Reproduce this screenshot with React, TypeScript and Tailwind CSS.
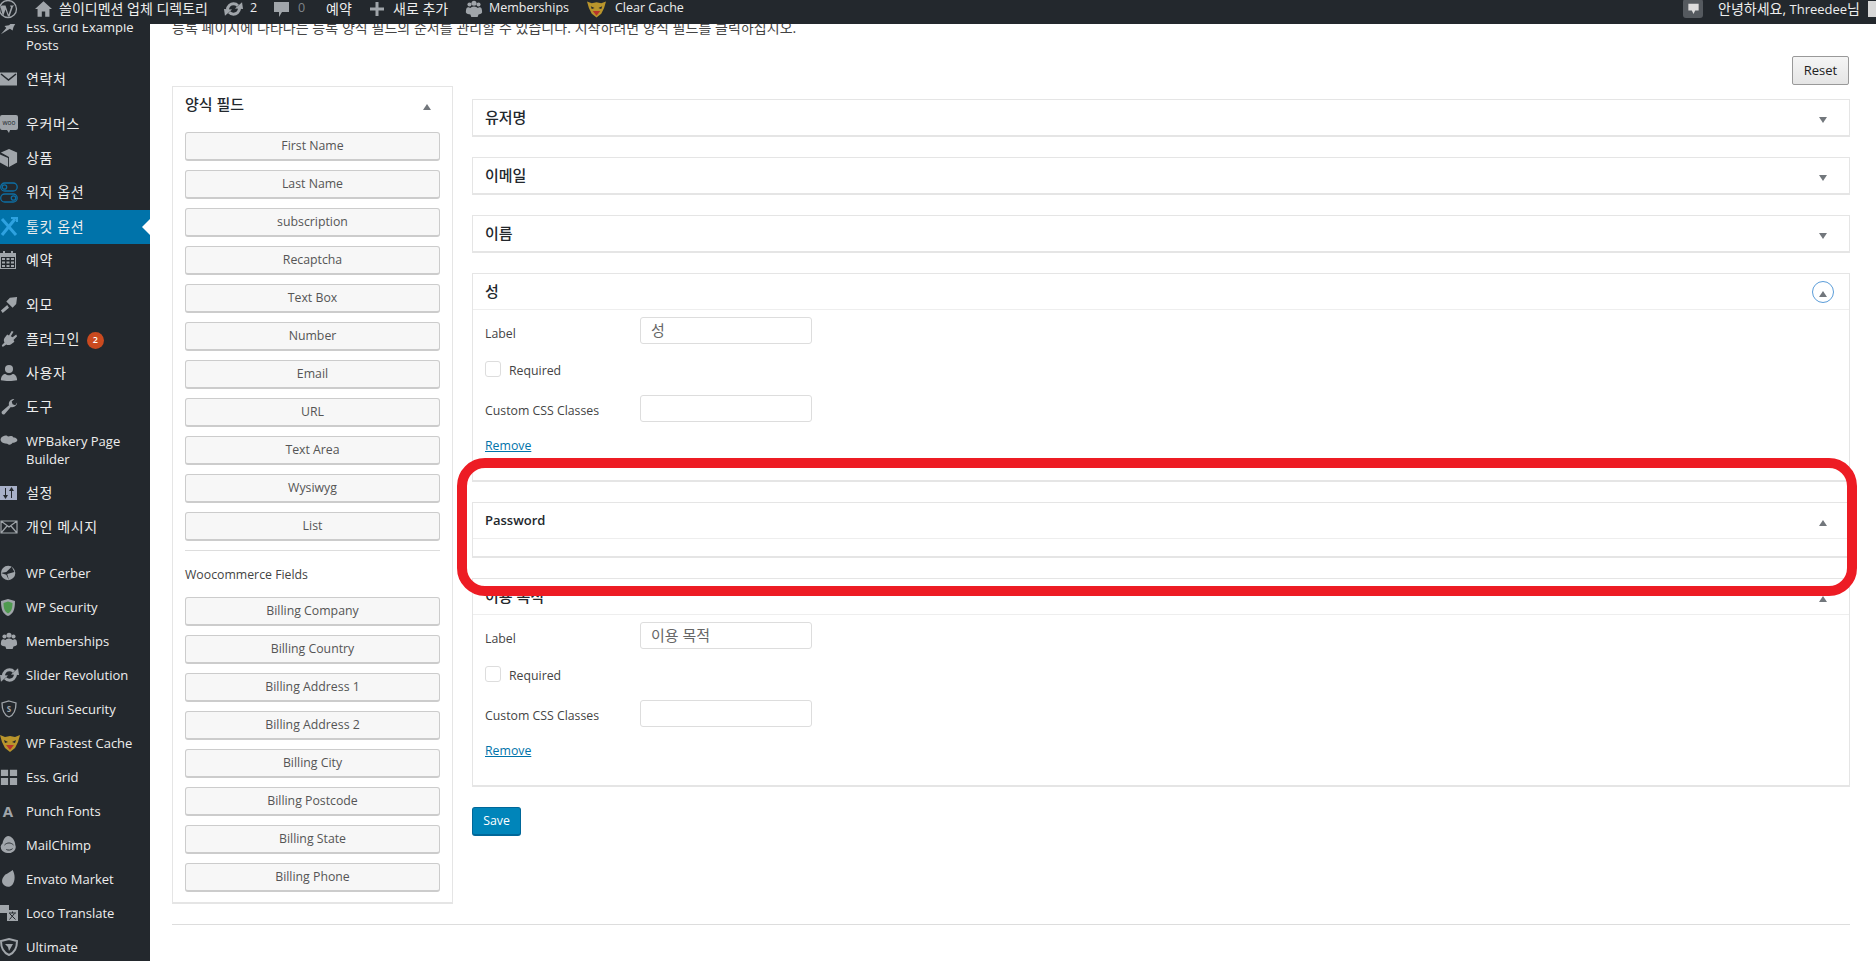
import type { ReactNode } from "react";

const base = "font-['Open_Sans','Noto_Sans_CJK_KR',sans-serif]";

const Tri = ({ up = false }: { up?: boolean }) => (
  <svg width="8" height="6" viewBox="0 0 8 6" className="translate-y-[2px] fill-[#72777c]">
    <path d={up ? "M4 0l4 6H0z" : "M0 0h8L4 6z"} />
  </svg>
);

const G = ({ children }: { children: ReactNode }) => (
  <svg width="18" height="18" viewBox="0 0 20 20" className="shrink-0 fill-[#a0a5aa]">
    {children}
  </svg>
);

const Sync = () => (
  <svg width="19" height="16" viewBox="0 0 20 16" className="shrink-0 fill-[#a0a5aa]">
    <path d="M3.500 9C4 5 7 2.500 10 2.500c2 0 3.500.8 4.500 2" fill="none" stroke="#a0a5aa" strokeWidth="3.200" />
    <path d="M16.500 7C16 11 13 13.500 10 13.500c-2 0-3.500-.8-4.500-2" fill="none" stroke="#a0a5aa" strokeWidth="3.200" />
    <path d="M11.500 7.500L20 8l-1-7zM8.500 8.500L0 8l1 7z" />
  </svg>
);

const Tiger = ({ w = 20 }: { w?: number }) => (
  <svg width={w} height="18" viewBox="0 0 20 18" className="shrink-0">
    <path d="M0 1l5 2 5-1 5 1 5-2-2 7-3 6-5 4-5-4-3-6z" fill="#b9952c" />
    <path d="M4 6l4 2-3 1zM16 6l-4 2 3 1z" fill="#23282d" />
    <path d="M6 11h8l-4 5z" fill="#b8342c" />
  </svg>
);

const Members = () => (
  <G>
    <circle cx="5" cy="5" r="2.300" />
    <circle cx="10" cy="3.500" r="2.800" />
    <circle cx="15" cy="5" r="2.300" />
    <path d="M1 14c0-5 1-6 3-6l2 1 1-1c2-1 4-1 6 0l1 1 2-1c2 0 3 1 3 6-1 2-3 2-4 2l-1 3H7l-1-3c-2 0-4 0-5-2z" />
  </G>
);

type Item = { label: string; ko?: boolean; lines?: number; icon: ReactNode; after?: string; active?: boolean; badge?: string };

const menu: Item[] = [
  { label: "Ess. Grid Example Posts", lines: 2, icon: <G><path d="M1 18l6-7-2-2 5-1 7-6 2 1-4 7-1 4-3-2z" /></G> },
  { label: "연락처", ko: true, after: "mb-[11px]", icon: <svg width="18" height="14" viewBox="0 0 18 14"><rect width="17" height="13" y="0.500" fill="#a0a5aa" /><path d="M1 2l7.500 6L16 2" fill="none" stroke="#23282d" strokeWidth="1.600" /></svg> },
  { label: "우커머스", ko: true, icon: <svg width="18" height="20" viewBox="0 0 18 20"><rect y="1" width="18" height="15" rx="2" fill="#a0a5aa" /><path d="M7 16l2 3 1-3z" fill="#a0a5aa" /><text x="9" y="11" textAnchor="middle" fontSize="6.500" fill="#23282d" fontFamily="Open Sans">woo</text></svg> },
  { label: "상품", ko: true, icon: <G><path d="M10 0l9 4v11l-9 5V9L1 4zM0 6l9 4v10l-9-5z" /></G> },
  { label: "위지 옵션", ko: true, icon: <svg width="18" height="21" viewBox="0 0 18 21" fill="none" stroke="#0e6ea3" strokeWidth="1.300"><rect x="0.700" y="1" width="16.500" height="8" rx="4" /><circle cx="4.500" cy="5" r="2.200" /><rect x="0.700" y="12" width="16.500" height="8" rx="4" /><circle cx="13.500" cy="16" r="2.200" /></svg> },
  { label: "툴킷 옵션", ko: true, active: true, icon: <svg width="18" height="20" viewBox="0 0 18 20" fill="none" stroke="#2ea2e0" strokeWidth="3"><path d="M15 2L2 18" /><path d="M2 2l14 16" /><path d="M11 1h6v4" strokeWidth="2" /></svg> },
  { label: "예약", ko: true, after: "mb-[11px]", icon: <svg width="16" height="18" viewBox="0 0 16 18"><rect y="2" width="16" height="16" fill="#a0a5aa" /><rect x="3" y="0" width="2" height="4" fill="#a0a5aa" /><rect x="11" y="0" width="2" height="4" fill="#a0a5aa" /><path d="M1 6h14v11H1z" fill="#23282d" /><path d="M2 7h3v2H2zM6.500 7h3v2h-3zM11 7h3v2h-3zM2 10.500h3v2H2zM6.500 10.500h3v2h-3zM11 10.500h3v2h-3zM2 14h3v2H2zM6.500 14h3v2h-3zM11 14h3v2h-3z" fill="#a0a5aa" /></svg> },
  { label: "외모", ko: true, icon: <G><path d="M19 1l-8 1-4 4 7 7 4-4zM8 10l-7 6 2 3 7-6z" /></G> },
  { label: "플러그인", ko: true, badge: "2", icon: <G><path d="M13 1l2 1-3 5 2 1 4-3 1 2-4 4 1 2-4 3c-2 1-4 1-5 0l-4 3-1-2 3-3c-1-2-1-3 0-5l3-4 2 1z" /></G> },
  { label: "사용자", ko: true, icon: <G><circle cx="10" cy="5.500" r="4.500" /><path d="M1 18c0-5 3-7 5-7 2 2 6 2 8 0 2 0 5 2 5 7-5 1-13 1-18 0z" /></G> },
  { label: "도구", ko: true, icon: <G><path d="M19 5c0 3-3 6-7 5l-7 8c-2 1-4-1-3-3l8-7c-1-4 2-7 6-7l-3 3 1 3 3 1z" /></G> },
  { label: "WPBakery Page Builder", lines: 2, icon: <G><path d="M3 5c3-2 5-1 6 0 2-1 5-1 6 1 3 0 5 2 4 4-1 1-3 2-5 2-1 2-4 3-6 1-3 0-6-1-7-3-1-2 0-4 2-5z" /></G> },
  { label: "설정", ko: true, icon: <svg width="17" height="14" viewBox="0 0 17 14"><rect width="17" height="14" fill="#a7b0c8" /><path d="M5 2v7H3l2.500 4L8 9H6V2zM12 12V5h2l-2.500-4L9 5h2v7z" fill="#23282d" /></svg> },
  { label: "개인 메시지", ko: true, after: "mb-[12px]", icon: <svg width="18" height="14" viewBox="0 0 18 14" fill="none" stroke="#a0a5aa" strokeWidth="1.200"><path d="M1 1h16v12H1zM1 1l8 6 8-6M1 13l6-7M17 13l-6-7" /></svg> },
  { label: "WP Cerber", icon: <G><circle cx="9" cy="10" r="8" /><path d="M13 3L7 9l-6 1 6 2 3 6-2-7 8-2z" fill="#23282d" /></G> },
  { label: "WP Security", icon: <svg width="14" height="17" viewBox="0 0 14 17" className="ml-[1px]"><path d="M7 0l7 2c0 9-2 13-7 15C2 15 0 11 0 2z" fill="#a0a5aa" /><path d="M7 2.500l4.500 1.500c0 6-1.500 9-4.500 10.500C4 13 2.500 10 2.500 4z" fill="#4f9a4f" /></svg> },
  { label: "Memberships", icon: <Members /> },
  { label: "Slider Revolution", icon: <Sync /> },
  { label: "Sucuri Security", icon: <svg width="16" height="18" viewBox="0 0 16 18" className="ml-[1px]"><path d="M8 1l7 2c0 8-2 12-7 14C3 15 1 11 1 3z" fill="none" stroke="#a0a5aa" strokeWidth="1.300" /><text x="8" y="12" textAnchor="middle" fontSize="8" fontWeight="700" fill="#a0a5aa" fontFamily="Open Sans">S</text></svg> },
  { label: "WP Fastest Cache", icon: <Tiger /> },
  { label: "Ess. Grid", icon: <G><path d="M1 2h8v7H1zM11 2h8v7h-8zM1 11h8v8H1zM11 11h8v8h-8z" /></G> },
  { label: "Punch Fonts", icon: <span className="w-[16px] text-center font-['Open_Sans'] text-[15px] font-bold text-[#a0a5aa]">A</span> },
  { label: "MailChimp", icon: <G><path d="M9 0c4 0 8 5 8 10 2 4-2 9-7 9-5 0-9-3-9-6-1-2 1-4 2-5 0-3 3-8 6-8z" /><path d="M5 10c3-3 7-3 10 0M7 15c2 1 5 1 7-1" fill="none" stroke="#23282d" /></G> },
  { label: "Envato Market", icon: <G><path d="M14 0c3 5 3 12 0 16-3 4-9 3-11-1-2-4 1-8 3-10 2-1 6-3 8-5z" /></G> },
  { label: "Loco Translate", icon: <svg width="18" height="16" viewBox="0 0 18 16"><rect width="9" height="8" fill="#a0a5aa" /><rect x="7" y="5" width="11" height="11" fill="#a0a5aa" /><path d="M9 8h7M12.500 6.500V8M9.500 14.500l5-6M9.500 8.500l6 6" stroke="#23282d" fill="none" /></svg> },
  { label: "Ultimate", icon: <svg width="18" height="18" viewBox="0 0 18 18"><path d="M9 1l8 2c0 8-3 12-8 14C4 15 1 11 1 3z" fill="none" stroke="#a0a5aa" strokeWidth="2" /><path d="M5 6l8 0-4 7-1-4z" fill="#a0a5aa" /></svg> },
];

function MenuItem({ item }: { item: Item }) {
  return (
    <div
      className={`relative flex shrink-0 ${item.lines === 2 ? "h-[52px]" : "h-[34px]"} ${item.after ?? ""} ${
        item.active ? "mt-[1px] -mb-[1px] bg-[#0073aa]" : ""
      }`}
    >
      <div className="flex h-[34px] w-[26px] shrink-0 items-center">{item.icon}</div>
      <div
        className={`flex-1 pt-[8px] pr-2 leading-[18px] text-[#eeeeee] ${
          item.ko ? "text-[14px] tracking-[0.6px]" : "text-[13px]"
        }`}
      >
        {item.label}
        {item.badge && (
          <span className="ml-[7px] inline-flex h-[17px] w-[17px] items-center justify-center rounded-full bg-[#ca4a1f] align-middle text-[9px] font-semibold tracking-normal text-white">
            {item.badge}
          </span>
        )}
      </div>
      {item.active && (
        <div className="absolute top-[9px] right-0 h-0 w-0 border-y-[8px] border-r-[8px] border-y-transparent border-r-white" />
      )}
    </div>
  );
}

const basicFields = ["First Name", "Last Name", "subscription", "Recaptcha", "Text Box", "Number", "Email", "URL", "Text Area", "Wysiwyg", "List"];
const wooFields = ["Billing Company", "Billing Country", "Billing Address 1", "Billing Address 2", "Billing City", "Billing Postcode", "Billing State", "Billing Phone"];

function FieldButton({ label }: { label: string }) {
  return (
    <div className="flex h-[29px] items-center justify-center rounded-[3px] border border-b-2 border-[#cccccc] bg-[#f7f7f7] pt-[1px] text-[12.300px] text-[#555555]">
      {label}
    </div>
  );
}

function ClosedPanel({ title }: { title: string }) {
  return (
    <div className="flex h-[38px] items-center justify-between border border-b-2 border-[#e5e5e5] pr-[22px] pl-[12px]">
      <span className="text-[15px] font-medium text-[#23282d]">{title}</span>
      <Tri />
    </div>
  );
}

function OpenPanel({ title, value, focus = false }: { title: string; value: string; focus?: boolean }) {
  return (
    <div className="border border-b-2 border-[#e5e5e5]">
      <div className="flex h-[36px] items-center justify-between border-b border-[#eeeeee] pr-[22px] pl-[12px]">
        <span className="text-[15px] font-medium text-[#23282d]">{title}</span>
        {focus ? (
          <span className="-mr-[7px] flex h-[22px] w-[22px] items-center justify-center rounded-full border-[1.500px] border-[#5b9dd9]">
            <Tri up />
          </span>
        ) : (
          <Tri up />
        )}
      </div>
      <div className="px-[12px] pt-[7px] pb-[25px] text-[12.300px] text-[#444444]">
        <div className="flex h-[27px] items-start">
          <span className="w-[155px] shrink-0 pt-[8px]">Label</span>
          <div className="flex h-[27px] w-[172px] items-center rounded-[3px] border border-[#dddddd] px-[10px] text-[15px] text-[#666666]">{value}</div>
        </div>
        <div className="mt-[17px] flex h-[16px] items-center">
          <span className="h-[16px] w-[16px] rounded-[3px] border border-[#dddddd]" />
          <span className="ml-[8px] translate-y-[2px]">Required</span>
        </div>
        <div className="mt-[18px] flex h-[27px] items-start">
          <span className="w-[155px] shrink-0 pt-[7px]">Custom CSS Classes</span>
          <div className="h-[27px] w-[172px] rounded-[3px] border border-[#dddddd]" />
        </div>
        <div className="mt-[15px] leading-[18px] text-[#0073aa] underline">Remove</div>
      </div>
    </div>
  );
}

export default function App() {
  return (
    <div className={`relative flex h-[961px] w-[1876px] flex-col overflow-hidden bg-white ${base}`}>
      <header className="z-10 flex h-[24px] shrink-0 items-center bg-[#23282d] pb-[7px] text-[12.500px] text-[#eeeeee]">
        <svg width="20" height="20" viewBox="0 0 20 20" className="-ml-[2px] shrink-0">
          <circle cx="10" cy="10" r="8.500" fill="none" stroke="#a0a5aa" strokeWidth="1.300" />
          <path d="M3.500 6.500h4l3 9 2.500-7-1-2h4.500l-1.500 1-3.500 10h-1.500l-2.500-7-2.500 7H5L2.500 8z" fill="#a0a5aa" />
        </svg>
        <svg width="17" height="16" viewBox="0 0 20 18" className="ml-[17px] shrink-0 fill-[#a0a5aa]">
          <path d="M10 0l10 9h-3v9h-5v-6H8v6H3V9H0z" />
        </svg>
        <span className="ml-[7px] w-[165px] shrink-0 text-[14px]">쓸이디멘션 업체 디렉토리</span>
        <Sync />
        <span className="ml-[7px] w-[24px] shrink-0">2</span>
        <svg width="15" height="16" viewBox="0 0 15 16" className="shrink-0 fill-[#a0a5aa]">
          <path d="M0 1h15v10H8l-3 5v-5H0z" />
        </svg>
        <span className="ml-[9px] w-[28px] shrink-0 text-[#7f8489]">0</span>
        <span className="w-[44px] shrink-0 text-[14px]">예약</span>
        <svg width="14" height="14" viewBox="0 0 14 14" className="shrink-0 fill-[#a0a5aa]">
          <path d="M5.500 0h3v5.500H14v3H8.500V14h-3V8.500H0v-3h5.500z" />
        </svg>
        <span className="ml-[9px] w-[72px] shrink-0 text-[14px]">새로 추가</span>
        <Members />
        <span className="ml-[6px] w-[98px] shrink-0">Memberships</span>
        <Tiger w={19} />
        <span className="ml-[9px]">Clear Cache</span>
        <div className="ml-auto flex items-center">
          <span className="flex h-[19px] w-[20px] items-center justify-center rounded-[3px] bg-[#555a5f]">
            <svg width="11" height="11" viewBox="0 0 15 16" className="fill-[#dddddd]">
              <path d="M0 1h15v10H10l-2.500 5L5 11H0z" />
            </svg>
          </span>
          <span className="ml-[15px] text-[13px]">
            <span className="text-[14px]">안녕하세요,</span> Threedee<span className="text-[14px]">님</span>
          </span>
          <span className="ml-[8px] h-[16px] w-[8px] bg-[#d8d8d8]" />
        </div>
      </header>
      <div className="flex min-h-0 flex-1">
        <aside className="-mt-[14px] flex w-[150px] shrink-0 flex-col bg-[#23282d]">
          {menu.map((m) => (
            <MenuItem key={m.label} item={m} />
          ))}
        </aside>
        <main className="min-w-0 flex-1 pr-[26px] pl-[22px] text-[#444444]">
          <p className="-mt-[1px] h-[33px] text-[14px] leading-[10px] tracking-[0.05px] whitespace-nowrap text-[#444444]">
            등록 페이지에 나타나는 등록 양식 필드의 순서를 관리할 수 있습니다. 시작하려면 양식 필드를 클릭하십시오.
          </p>
          <div className="flex justify-end pr-[1px]">
            <div className="flex h-[29px] w-[57px] items-center justify-center rounded-[2px] border border-[#999999] bg-gradient-to-b from-[#f5f5f5] to-[#e5e5e5] text-[13px] text-[#222222]">
              Reset
            </div>
          </div>
          <div className="mt-[1px] flex gap-[19px]">
            <section className="h-[818px] w-[281px] shrink-0 border border-b-2 border-[#e5e5e5] px-[12px]">
              <div className="flex h-[45px] justify-between pt-[7px] pr-[9px]">
                <span className="text-[15px] leading-[20px] font-medium text-[#23282d]">양식 필드</span>
                <span className="pt-[8px]">
                  <Tri up />
                </span>
              </div>
              <div className="flex flex-col gap-[9px]">
                {basicFields.map((f) => (
                  <FieldButton key={f} label={f} />
                ))}
              </div>
              <hr className="mt-[9px] border-[#dddddd]" />
              <div className="flex h-[46px] items-center pt-[2px] text-[12.300px] text-[#444444]">Woocommerce Fields</div>
              <div className="flex flex-col gap-[9px]">
                {wooFields.map((f) => (
                  <FieldButton key={f} label={f} />
                ))}
              </div>
            </section>
            <section className="min-w-0 flex-1 pt-[13px]">
              <div className="flex flex-col gap-[20px]">
                <ClosedPanel title="유저명" />
                <ClosedPanel title="이메일" />
                <ClosedPanel title="이름" />
                <OpenPanel title="성" value="성" focus />
                <div className="border border-b-2 border-[#e5e5e5]">
                  <div className="flex h-[36px] items-center justify-between border-b border-[#eeeeee] pr-[22px] pl-[12px]">
                    <span className="text-[13px] font-semibold text-[#23282d]">Password</span>
                    <Tri up />
                  </div>
                  <div className="h-[17px]" />
                </div>
                <OpenPanel title="이용 목적" value="이용 목적" />
              </div>
              <div className="mt-[20px] flex h-[29px] w-[49px] items-center justify-center rounded-[3px] border border-b-2 border-[#006799] bg-[#0085ba] text-[12.300px] text-white">
                Save
              </div>
            </section>
          </div>
          <hr className="mt-[20px] border-[#dddddd]" />
        </main>
      </div>
      <div className="absolute top-[458px] left-[457px] h-[138px] w-[1400px] rounded-[28px] border-[10px] border-[#ed1c24]" />
    </div>
  );
}
